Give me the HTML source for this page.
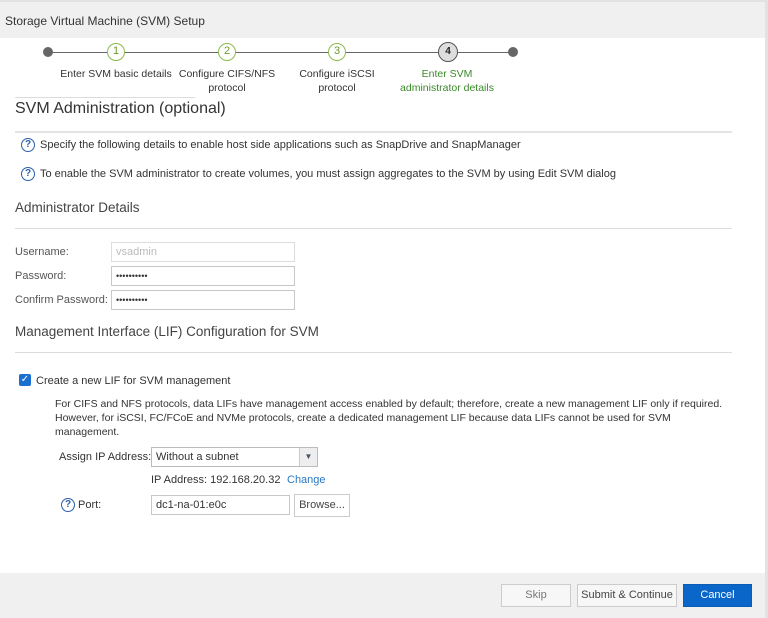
<!DOCTYPE html>
<html><head><style>
*{margin:0;padding:0;box-sizing:border-box}
body{width:768px;height:618px;background:#e2e2e2;font-family:"Liberation Sans",sans-serif;color:#333;position:relative;overflow:hidden;font-size:11px}
.dlg{position:absolute;left:0;top:2px;width:765px;height:616px;background:#fff}
.hdr{position:absolute;left:0;top:0;width:765px;height:36px;background:#f0f0f0;font-size:12px;padding:12px 0 0 5px;color:#333}
.ftr{position:absolute;left:0;top:571px;width:765px;height:45px;background:#f0f0f0}
.a{position:absolute;white-space:nowrap}
.ln{position:absolute;height:1px;background:#dcdcdc}
.lbl{text-align:center;font-size:10.5px;line-height:14px}
.in{position:absolute;border:1px solid #c8c8c8;background:#fff;height:20px;font-size:11px;padding:3px 4px}
.q{position:absolute;width:14px;height:14px;border:1.5px solid #2a5faa;border-radius:50%;color:#2a5faa;font-size:10px;font-weight:bold;text-align:center;line-height:11px}
.btn{position:absolute;height:23px;border:1px solid #ccc;background:#f7f7f7;text-align:center;line-height:21px;font-size:11px;color:#444}
.st{position:absolute;width:18px;height:18px;border-radius:50%;border:1.5px solid #8dbb4b;background:#fff;color:#6a9a2a;font-size:11px;text-align:center;line-height:15px}
</style></head><body>
<div class="dlg">
<div class="hdr">Storage Virtual Machine (SVM) Setup</div>
<div class="ln" style="left:48px;top:50px;width:465px;background:#666"></div>
<div class="a" style="left:43px;top:45px;width:10px;height:10px;border-radius:50%;background:#666"></div>
<div class="a" style="left:508px;top:45px;width:10px;height:10px;border-radius:50%;background:#666"></div>
<div class="st" style="left:107px;top:41px">1</div>
<div class="st" style="left:218px;top:41px">2</div>
<div class="st" style="left:328px;top:41px">3</div>
<div class="a" style="left:438px;top:40px;width:20px;height:20px;border-radius:50%;border:1.5px solid #555;background:#ddd;color:#222;font-size:10px;font-weight:bold;text-align:center;line-height:17px">4</div>
<div class="a lbl" style="left:56px;top:65px;width:120px">Enter SVM basic details</div>
<div class="a lbl" style="left:172px;top:65px;width:110px">Configure CIFS/NFS<br>protocol</div>
<div class="a lbl" style="left:282px;top:65px;width:110px">Configure iSCSI<br>protocol</div>
<div class="a lbl" style="left:387px;top:65px;width:120px;color:#3a8a2a">Enter SVM<br>administrator details</div>
<div class="ln" style="left:15px;top:95px;width:180px"></div>
<div class="a" style="left:15px;top:98px;font-size:16px;color:#333">SVM Administration (optional)</div>
<div class="ln" style="left:15px;top:129px;width:717px;height:2px;background:#e4e4e4"></div>
<div class="q" style="left:21px;top:136px">?</div>
<div class="a" style="left:40px;top:137px">Specify the following details to enable host side applications such as SnapDrive and SnapManager</div>
<div class="q" style="left:21px;top:165px">?</div>
<div class="a" style="left:40px;top:166px">To enable the SVM administrator to create volumes, you must assign aggregates to the SVM by using Edit SVM dialog</div>
<div class="a" style="left:15px;top:198px;font-size:13.5px;color:#444">Administrator Details</div>
<div class="ln" style="left:15px;top:226px;width:717px"></div>
<div class="a" style="left:15px;top:244px;color:#555">Username:</div>
<div class="in" style="left:111px;top:240px;width:184px;color:#bbb;border-color:#ddd">vsadmin</div>
<div class="a" style="left:15px;top:268px;color:#555">Password:</div>
<div class="in" style="left:111px;top:264px;width:184px;font-size:9px;padding-top:4px">••••••••••</div>
<div class="a" style="left:15px;top:292px;color:#555">Confirm Password:</div>
<div class="in" style="left:111px;top:288px;width:184px;font-size:9px;padding-top:4px">••••••••••</div>
<div class="a" style="left:15px;top:322px;font-size:13.5px;color:#444">Management Interface (LIF) Configuration for SVM</div>
<div class="ln" style="left:15px;top:350px;width:717px"></div>
<div class="a" style="left:19px;top:372px;width:12px;height:12px;background:#1a6fd0;border-radius:2px;color:#fff;font-size:10px;line-height:12px;text-align:center">✓</div>
<div class="a" style="left:36px;top:373px">Create a new LIF for SVM management</div>
<div class="a" style="left:55px;top:395px;line-height:14px;font-size:10.5px;white-space:normal;width:668px">For CIFS and NFS protocols, data LIFs have management access enabled by default; therefore, create a new management LIF only if required. However, for iSCSI, FC/FCoE and NVMe protocols, create a dedicated management LIF because data LIFs cannot be used for SVM management.</div>
<div class="a" style="left:59px;top:449px">Assign IP Address:</div>
<div class="in" style="left:151px;top:445px;width:167px;border-color:#bbb">Without a subnet</div>
<div class="a" style="left:299px;top:446px;width:18px;height:18px;background:#eee;border-left:1px solid #ccc;color:#456;font-size:8px;text-align:center;line-height:18px">▼</div>
<div class="a" style="left:151px;top:472px">IP Address: 192.168.20.32</div>
<div class="a" style="left:287px;top:472px;color:#2a7ac0">Change</div>
<div class="q" style="left:61px;top:496px">?</div>
<div class="a" style="left:78px;top:497px">Port:</div>
<div class="in" style="left:151px;top:493px;width:139px">dc1-na-01:e0c</div>
<div class="btn" style="left:294px;top:492px;width:56px;background:#fff">Browse...</div>
<div class="ftr">
<div class="btn" style="left:501px;top:11px;width:70px;color:#777">Skip</div>
<div class="btn" style="left:577px;top:11px;width:100px">Submit &amp; Continue</div>
<div class="btn" style="left:683px;top:11px;width:69px;background:#0a66c8;border-color:#0a5cb5;color:#fff">Cancel</div>
</div>
</div>
</body></html>
